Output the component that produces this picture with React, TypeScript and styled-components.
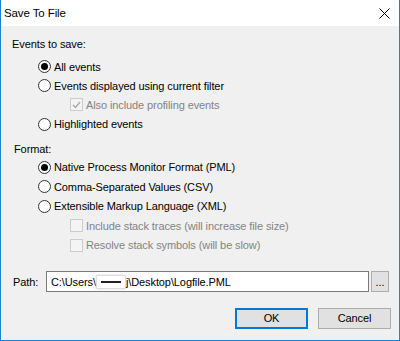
import styled, { createGlobalStyle } from "styled-components";

const GlobalStyle = createGlobalStyle`
  html, body {
    margin: 0;
    padding: 0;
    background: #f0f0f0;
  }
  body {
    font-family: "Liberation Sans", Arial, sans-serif;
    font-size: 11px;
    letter-spacing: -0.1px;
    color: #000;
  }
`;

const Window = styled.div`
  width: 400px;
  height: 341px;
  box-sizing: border-box;
  border: 1px solid #1883d7;
  border-top: none;
  background: #f0f0f0;
  display: flex;
  flex-direction: column;
`;

const TitleBar = styled.div`
  height: 26px;
  background: #fff;
  display: flex;
  align-items: center;
  justify-content: space-between;
  padding-left: 3px;
  padding-right: 9px;
  font-size: 11.5px;
  flex-shrink: 0;
`;

const CloseIcon = styled.svg`
  width: 11px;
  height: 11px;
  display: block;
`;

const Body = styled.div`
  flex: 1;
  padding: 10px 8px 0 11px;
  display: flex;
  flex-direction: column;
`;

const GroupLabel = styled.div<{ $indent?: number; $top?: number }>`
  height: 16px;
  line-height: 16px;
  padding-left: ${(p) => p.$indent ?? 0}px;
  margin-top: ${(p) => p.$top ?? 0}px;
`;

const Options = styled.div<{ $top: number; $row: number }>`
  margin-top: ${(p) => p.$top}px;
  display: flex;
  flex-direction: column;
  & > * {
    height: ${(p) => p.$row}px;
  }
`;

const OptionRow = styled.label<{ $indent: number; $disabled?: boolean }>`
  display: flex;
  align-items: center;
  padding-left: ${(p) => p.$indent}px;
  color: ${(p) => (p.$disabled ? "#838383" : "#000")};
  white-space: nowrap;
`;

const RadioCircle = styled.span<{ $checked?: boolean }>`
  width: 13px;
  height: 13px;
  box-sizing: border-box;
  border-radius: 50%;
  border: 1px solid #333;
  background: #fff;
  margin-right: 3px;
  display: flex;
  align-items: center;
  justify-content: center;
  flex-shrink: 0;
  &::after {
    content: "";
    width: 7px;
    height: 7px;
    border-radius: 50%;
    background: #000;
    display: ${(p) => (p.$checked ? "block" : "none")};
  }
`;

const CheckBox = styled.span`
  width: 13px;
  height: 13px;
  box-sizing: border-box;
  border: 1px solid #cccccc;
  background: #f4f4f4;
  margin-right: 3px;
  flex-shrink: 0;
  display: flex;
  align-items: center;
  justify-content: center;
`;

const PathRow = styled.div`
  margin-top: 16px;
  display: flex;
  align-items: center;
  height: 22px;
`;

const PathLabel = styled.span`
  width: 33px;
  padding-left: 1px;
`;

const PathInput = styled.div`
  width: 323px;
  height: 21px;
  box-sizing: border-box;
  border: 1px solid #7a7a7a;
  background: #fff;
  display: flex;
  align-items: center;
  padding-left: 4px;
  white-space: nowrap;
`;

const Redacted = styled.span`
  display: inline-flex;
  align-items: center;
  justify-content: center;
  width: 28px;
  height: 12px;
  background: #fff;
  box-shadow: 0 0 2px 1px #cfcfcf;
  margin: 0 1px;
  &::after {
    content: "";
    width: 20px;
    height: 2px;
    background: #222;
  }
`;

const BrowseButton = styled.div`
  width: 18px;
  height: 21px;
  margin-left: 2px;
  box-sizing: border-box;
  border: 1px solid #adadad;
  background: #e1e1e1;
  display: flex;
  align-items: flex-end;
  justify-content: center;
  padding-bottom: 4px;
  line-height: 10px;
`;

const ButtonRow = styled.div`
  margin-top: 15px;
  display: flex;
  justify-content: flex-end;
  gap: 10px;
`;

const Button = styled.div<{ $default?: boolean }>`
  width: 73px;
  height: 21px;
  box-sizing: border-box;
  border: ${(p) => (p.$default ? "2px solid #0078d7" : "1px solid #adadad")};
  background: #e1e1e1;
  display: flex;
  align-items: center;
  justify-content: center;
`;

const Radio = ({ label, checked }: { label: string; checked?: boolean }) => (
  <OptionRow $indent={26}>
    <RadioCircle $checked={checked} />
    {label}
  </OptionRow>
);

const Check = ({ label, checked }: { label: string; checked?: boolean }) => (
  <OptionRow $indent={58} $disabled>
    <CheckBox>
      {checked && (
        <svg width="9" height="8" viewBox="0 0 9 8">
          <path d="M1 4 L3.5 6.5 L8 1" fill="none" stroke="#a8a8a8" strokeWidth="1.3" />
        </svg>
      )}
    </CheckBox>
    {label}
  </OptionRow>
);

export default function App() {
  return (
    <>
      <GlobalStyle />
      <Window>
        <TitleBar>
          <span>Save To File</span>
          <CloseIcon viewBox="0 0 11 11">
            <path d="M0.5 0.5 L10.5 10.5 M10.5 0.5 L0.5 10.5" stroke="#000" strokeWidth="1" />
          </CloseIcon>
        </TitleBar>
        <Body>
          <GroupLabel>Events to save:</GroupLabel>
          <Options $top={5} $row={19.2}>
            <Radio label="All events" checked />
            <Radio label="Events displayed using current filter" />
            <Check label="Also include profiling events" checked />
            <Radio label="Highlighted events" />
          </Options>
          <GroupLabel $indent={2} $top={7}>
            Format:
          </GroupLabel>
          <Options $top={1} $row={19.4}>
            <Radio label="Native Process Monitor Format (PML)" checked />
            <Radio label="Comma-Separated Values (CSV)" />
            <Radio label="Extensible Markup Language (XML)" />
            <Check label="Include stack traces (will increase file size)" />
            <Check label="Resolve stack symbols (will be slow)" />
          </Options>
          <PathRow>
            <PathLabel>Path:</PathLabel>
            <PathInput>
              C:\Users\<Redacted />j\Desktop\Logfile.PML
            </PathInput>
            <BrowseButton>...</BrowseButton>
          </PathRow>
          <ButtonRow>
            <Button $default>OK</Button>
            <Button>Cancel</Button>
          </ButtonRow>
        </Body>
      </Window>
    </>
  );
}
